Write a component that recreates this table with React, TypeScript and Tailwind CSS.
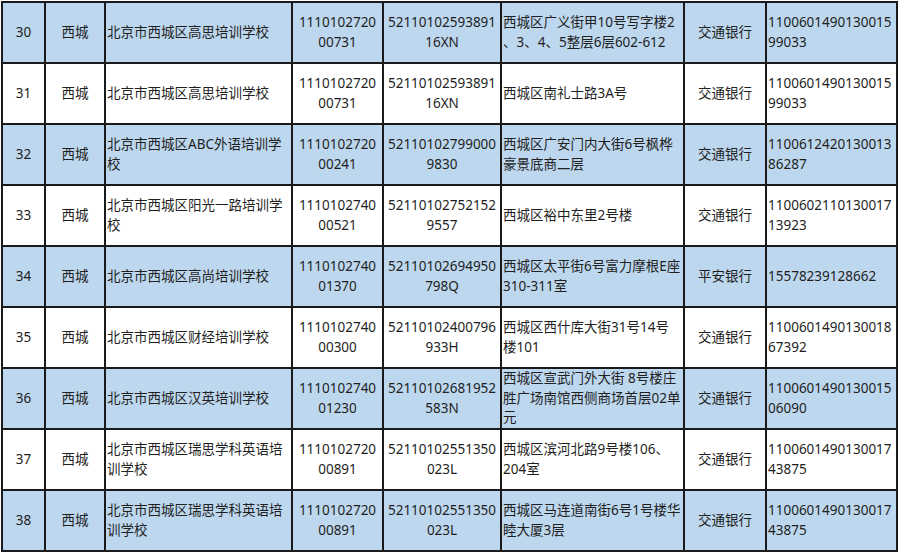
import React from "react"

interface Row {
  no: number
  name: string[]
  orgCode: string[]
  creditCode: string[]
  address: string[]
  bank: string
  account: string[]
}

const rows: Row[] = [
  {
    no: 30,
    name: ["北京市西城区高思培训学校"],
    orgCode: ["1110102720", "00731"],
    creditCode: ["52110102593891", "16XN"],
    address: ["西城区广义街甲10号写字楼2", "、3、4、5整层6层602-612"],
    bank: "交通银行",
    account: ["1100601490130015", "99033"],
  },
  {
    no: 31,
    name: ["北京市西城区高思培训学校"],
    orgCode: ["1110102720", "00731"],
    creditCode: ["52110102593891", "16XN"],
    address: ["西城区南礼士路3A号"],
    bank: "交通银行",
    account: ["1100601490130015", "99033"],
  },
  {
    no: 32,
    name: ["北京市西城区ABC外语培训学", "校"],
    orgCode: ["1110102720", "00241"],
    creditCode: ["52110102799000", "9830"],
    address: ["西城区广安门内大街6号枫桦", "豪景底商二层"],
    bank: "交通银行",
    account: ["1100612420130013", "86287"],
  },
  {
    no: 33,
    name: ["北京市西城区阳光一路培训学", "校"],
    orgCode: ["1110102740", "00521"],
    creditCode: ["52110102752152", "9557"],
    address: ["西城区裕中东里2号楼"],
    bank: "交通银行",
    account: ["1100602110130017", "13923"],
  },
  {
    no: 34,
    name: ["北京市西城区高尚培训学校"],
    orgCode: ["1110102740", "01370"],
    creditCode: ["52110102694950", "798Q"],
    address: ["西城区太平街6号富力摩根E座", "310-311室"],
    bank: "平安银行",
    account: ["15578239128662"],
  },
  {
    no: 35,
    name: ["北京市西城区财经培训学校"],
    orgCode: ["1110102740", "00300"],
    creditCode: ["52110102400796", "933H"],
    address: ["西城区西什库大街31号14号", "楼101"],
    bank: "交通银行",
    account: ["1100601490130018", "67392"],
  },
  {
    no: 36,
    name: ["北京市西城区汉英培训学校"],
    orgCode: ["1110102740", "01230"],
    creditCode: ["52110102681952", "583N"],
    address: ["西城区宣武门外大街 8号楼庄", "胜广场南馆西侧商场首层02单", "元"],
    bank: "交通银行",
    account: ["1100601490130015", "06090"],
  },
  {
    no: 37,
    name: ["北京市西城区瑞思学科英语培", "训学校"],
    orgCode: ["1110102720", "00891"],
    creditCode: ["52110102551350", "023L"],
    address: ["西城区滨河北路9号楼106、", "204室"],
    bank: "交通银行",
    account: ["1100601490130017", "43875"],
  },
  {
    no: 38,
    name: ["北京市西城区瑞思学科英语培", "训学校"],
    orgCode: ["1110102720", "00891"],
    creditCode: ["52110102551350", "023L"],
    address: ["西城区马连道南街6号1号楼华", "睦大厦3层"],
    bank: "交通银行",
    account: ["1100601490130017", "43875"],
  },
]

function Cell({ lines, blue, left }: { lines: string[]; blue: boolean; left?: boolean }) {
  return (
    <div
      className={`flex flex-col justify-center overflow-hidden whitespace-nowrap ${
        blue ? "bg-[#bdd7ee]" : "bg-white"
      } ${left ? "items-start pl-[1px] text-left" : "items-center text-center"}`}
    >
      {lines.map((l, i) => (
        <span key={i}>{l}</span>
      ))}
    </div>
  )
}

export default function App() {
  return (
    <div className="min-h-screen bg-white pl-[1px] pt-[1px]">
      <div
        className="grid w-fit grid-cols-[41px_58px_185px_89px_116px_181px_80px_129px] auto-rows-[59px] gap-[2px] bg-[#1a1a1a] p-[2px] text-[13.5px] leading-[19.5px] text-[#1f1f1f]"
        style={{ fontFamily: '"Noto Sans", "Noto Sans CJK SC", sans-serif' }}
      >
        {rows.map((r, i) => {
          const blue = i % 2 === 0
          return (
            <React.Fragment key={r.no}>
              <Cell lines={[String(r.no)]} blue={blue} />
              <Cell lines={["西城"]} blue={blue} />
              <Cell lines={r.name} blue={blue} left />
              <Cell lines={r.orgCode} blue={blue} />
              <Cell lines={r.creditCode} blue={blue} />
              <Cell lines={r.address} blue={blue} left />
              <Cell lines={[r.bank]} blue={blue} />
              <Cell lines={r.account} blue={blue} left />
            </React.Fragment>
          )
        })}
      </div>
    </div>
  )
}
